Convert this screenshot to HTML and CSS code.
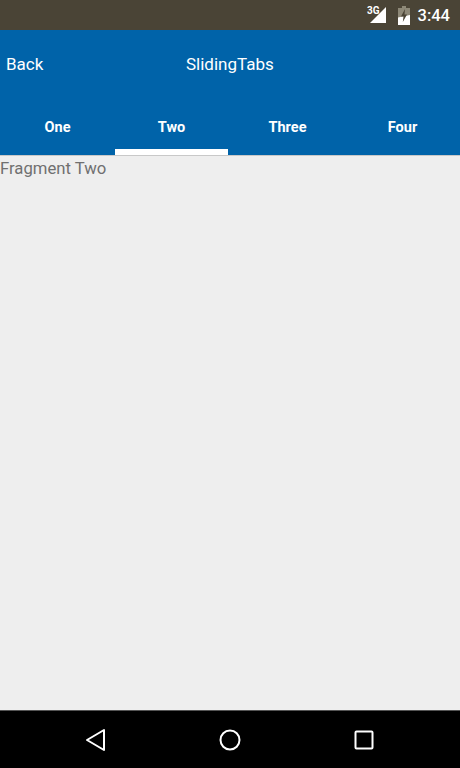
FILE: index.html
```html
<!DOCTYPE html>
<html lang="en">
<head>
	<meta charset="UTF-8">
	<meta name="viewport" content="width=device-width, initial-scale=1.0">
	<title>SlidingTabs</title>
	<link rel="stylesheet" href="styles.css">
</head>
<body>
	<div class="phone">
		<!-- status bar -->
		<div class="status">
			<span class="net">3G</span>
			<svg class="signal" width="18" height="18" viewBox="0 0 18 18"><path d="M17 1V17H1Z" fill="#fff"/></svg>
			<svg class="battery" width="12" height="19" viewBox="0 0 12 19">
				<path d="M4 0H8V2H12V19H0V2H4Z" fill="#8d8877"/>
				<path d="M0 11.5L12 9V19H0Z" fill="#fff"/>
				<path d="M7 3L3 10.5H5.5L4.8 16L9 8.5H6.5Z" fill="#4a4436"/>
			</svg>
			<span class="clock">3:44</span>
		</div>
		<!-- nav bar -->
		<div class="navbar">
			<span class="back">Back</span>
			<span class="title">SlidingTabs</span>
		</div>
		<!-- tabs -->
		<div class="tabs">
			<div class="tab">One</div>
			<div class="tab active">Two</div>
			<div class="tab">Three</div>
			<div class="tab">Four</div>
		</div>
		<!-- content -->
		<div class="content">Fragment Two</div>
		<!-- android buttons -->
		<div class="softkeys">
			<svg width="24" height="26" viewBox="0 0 24 26"><path d="M20 3V23L3 13Z" fill="none" stroke="#fff" stroke-width="2" stroke-linejoin="round"/></svg>
			<svg width="24" height="24" viewBox="0 0 24 24"><circle cx="12" cy="12" r="9.5" fill="none" stroke="#fff" stroke-width="2"/></svg>
			<svg width="24" height="24" viewBox="0 0 24 24"><rect x="3.5" y="3.5" width="17" height="17" rx="1" fill="none" stroke="#fff" stroke-width="2"/></svg>
		</div>
	</div>
</body>
</html>
```

FILE: styles.css
```css
* {
	padding: 0;
	margin: 0;
	box-sizing: border-box;
}
body {
	font-family: Roboto, "Liberation Sans", sans-serif;
	background-color: #000;
}
.phone {
	width: 460px;
	height: 768px;
	display: flex;
	flex-direction: column;
	overflow: hidden;
}
/* status bar */
.status {
	height: 30px;
	background-color: #4a4436;
	color: #fff;
	display: flex;
	align-items: center;
	justify-content: flex-end;
	padding-right: 10px;
}
.net {
	font-size: 10px;
	font-weight: 700;
	margin-right: -11px;
	margin-bottom: 9px;
}
.signal {
	margin-right: 11px;
}
.battery {
	margin-right: 8px;
}
.clock {
	font-size: 16.5px;
	font-weight: 500;
}
/* nav bar */
.navbar {
	height: 67px;
	background-color: #0063a9;
	color: #fff;
	font-size: 17px;
	display: flex;
	align-items: center;
	padding-left: 6px;
}
.back {
	width: 180px;
}
/* tabs */
.tabs {
	height: 59px;
	background-color: #0063a9;
	border-bottom: 1px solid #c8c8c8;
	display: grid;
	grid-template-columns: repeat(4, 1fr);
	color: #fff;
	font-size: 14.5px;
	font-weight: 700;
}
.tab {
	display: flex;
	align-items: center;
	justify-content: center;
	padding-top: 2px;
}
.tab.active {
	margin-right: 2px;
	box-shadow: inset 0 -6px #fff;
}
/* content */
.content {
	flex: 1;
	background-color: #eee;
	color: #707070;
	font-size: 16.7px;
	line-height: 25px;
}
/* android buttons */
.softkeys {
	height: 58px;
	background-color: #000;
	border-top: 1px solid #555;
	display: flex;
	align-items: center;
	justify-content: space-between;
	padding: 0 84px;
}
```
